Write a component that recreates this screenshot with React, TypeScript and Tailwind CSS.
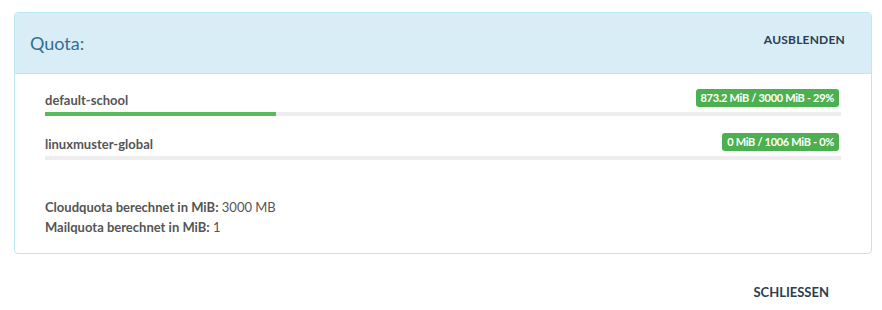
import React from "react";

const font = { fontFamily: "Lato, 'Noto Sans', sans-serif" };

function QuotaRow({ name, label, pct }: { name: string; label: string; pct: number }) {
  return (
    <div className="mb-[17px]">
      <div className="flex items-center justify-between h-[18px]">
        <span className="text-[13px] font-bold text-[#555555] relative top-[3px]">{name}</span>
        <span className="h-[18px] px-[5px] mr-[2px] rounded-[3px] bg-[#4caf50] text-white text-[11px] font-bold leading-[18px] tracking-[-0.3px]">{label}</span>
      </div>
      <div className="mt-[5px] h-[4px] bg-[#eeeeee]">
        <div className="h-full bg-[#5cb85c]" style={{ width: `${pct}%` }} />
      </div>
    </div>
  );
}

export default function App() {
  return (
    <div className="w-[882px] h-[310px] bg-white pt-[12px]" style={font}>
      <div className="ml-[14px] w-[858px] border border-[#bce8f1] rounded-[4px] overflow-hidden">
        <div className="h-[61px] bg-[#d9edf7] border-b border-[#bce8f1] flex items-center justify-between pl-[15px] pr-[26px]">
          <span className="text-[18px] text-[#31708f]">Quota:</span>
          <span className="text-[12px] font-bold text-[#2c3e50] tracking-[0.2px] mb-[6px]">AUSBLENDEN</span>
        </div>
        <div className="px-[30px] pt-[15px] pb-[16px]">
          <QuotaRow name="default-school" label="873.2 MiB / 3000 MiB - 29%" pct={29} />
          <QuotaRow name="linuxmuster-global" label="0 MiB / 1006 MiB - 0%" pct={0} />
          <div className="pt-[20px] text-[13px] text-[#555555] leading-[20px]">
            <div><span className="font-bold">Cloudquota berechnet in MiB:</span> 3000 MB</div>
            <div><span className="font-bold">Mailquota berechnet in MiB:</span> 1</div>
          </div>
        </div>
      </div>
      <div className="flex justify-end pr-[53px] mt-[29px]">
        <span className="text-[13px] font-bold text-[#2c3e50]">SCHLIESSEN</span>
      </div>
    </div>
  );
}
